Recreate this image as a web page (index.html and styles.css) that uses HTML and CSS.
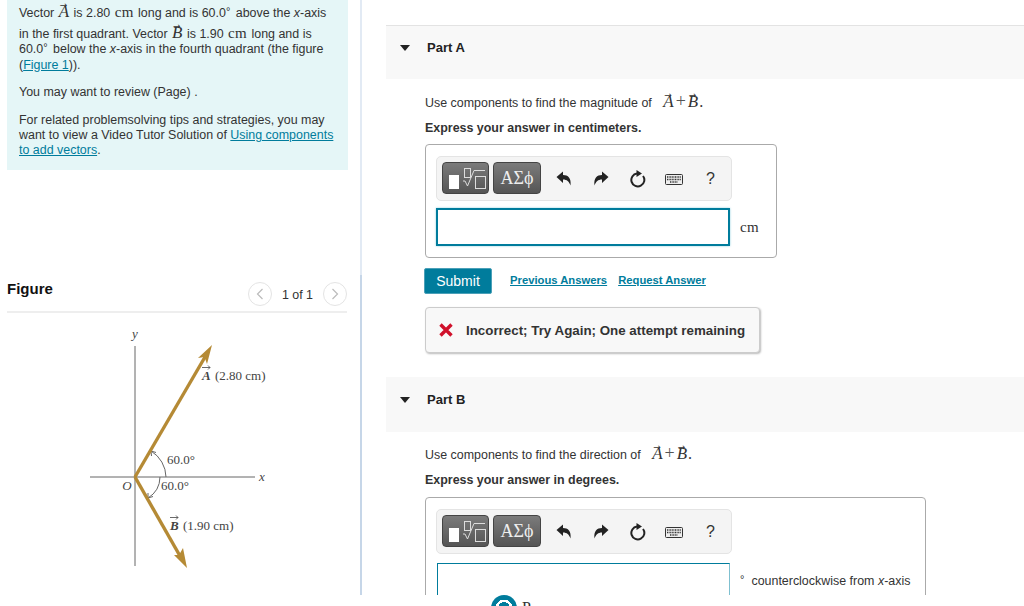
FILE: index.html
```html
<!DOCTYPE html>
<html lang="en">
<head>
  <meta charset="UTF-8" />
  <title>Vector addition</title>
  <link rel="stylesheet" href="styles.css">
</head>
<body>
  <div class="page">
    <div class="left-col">
      <div class="intro">
        <p class="first">
          <span class="line">Vector <span class="vec vec-a">A</span> is 2.80 <span class="unit">cm</span> long and is 60.0<sup>&deg;</sup> above the <i>x</i>-axis</span>
          <span class="line">in the first quadrant. Vector <span class="vec vec-b">B</span> is 1.90 <span class="unit">cm</span> long and is</span>
          60.0<sup>&deg;</sup> below the <i>x</i>-axis in the fourth quadrant (the figure<br>(<a href="#">Figure 1</a>)).
        </p>
        <p>You may want to review (Page) .</p>
        <p>For related problemsolving tips and strategies, you may<br>want to view a Video Tutor Solution of <a href="#">Using components<br>to add vectors</a>.</p>
      </div>

      <div class="figure-head">
        <h2>Figure</h2>
        <div class="pager">
          <span class="pager-btn"><svg width="8" height="12" viewBox="0 0 8 12"><path d="M6.5 1 L1.5 6 L6.5 11" /></svg></span>
          <span class="pager-text">1 of 1</span>
          <span class="pager-btn"><svg width="8" height="12" viewBox="0 0 8 12"><path d="M1.5 1 L6.5 6 L1.5 11" /></svg></span>
        </div>
      </div>

      <!-- viewBox starts at the figure's place on the page -->
      <svg class="figure" width="340" height="282" viewBox="7 313 340 282">
        <g class="axis">
          <line x1="135" y1="346" x2="135" y2="566" />
          <line x1="90" y1="477" x2="255" y2="477" />
          <path d="M166 477 A 31 31 0 0 0 151 451" />
          <path d="M160 477 A 25 25 0 0 1 148 498" />
          <path d="M151 451 l0.5 5 M151 451 l5 1.5 M148 498 l5 -1.5 M148 498 l0 -5" />
        </g>
        <line class="vector" x1="135" y1="477" x2="205" y2="357" />
        <path class="vector-head" d="M212 345 L198 358 L204.5 357 L207 364 Z" />
        <line class="vector" x1="135" y1="477" x2="180" y2="556" />
        <path class="vector-head" d="M187 568 L174 555 L179 555 L183 548 Z" />
        <text class="fig-italic" x="135" y="338" text-anchor="middle">y</text>
        <text class="fig-italic" x="262" y="481" text-anchor="middle">x</text>
        <text class="fig-italic" x="127" y="490" text-anchor="middle">O</text>
        <text class="fig-label" x="167" y="464">60.0&deg;</text>
        <text class="fig-label" x="161" y="490">60.0&deg;</text>
        <text class="fig-bold" x="202" y="380">A</text>
        <text class="fig-label" x="215" y="380">(2.80 cm)</text>
        <text class="fig-bold" x="170" y="530">B</text>
        <text class="fig-label" x="183" y="530">(1.90 cm)</text>
        <path class="fig-arrow" d="M202 367.5 h8 M208 365.5 l2 2 l-2 2 M170 517.5 h8 M176 515.5 l2 2 l-2 2" />
      </svg>
    </div>

    <div class="divider"></div>

    <div class="right-col">
      <section class="part part-a">
        <div class="part-head"><span class="caret"></span><span class="part-title">Part A</span></div>
        <div class="part-body">
          <p class="question">Use components to find the magnitude of <span class="math"><span class="vec vec-a">A</span><span class="plus">+</span><span class="vec vec-b">B</span>.</span></p>
          <p class="express">Express your answer in centimeters.</p>
          <div class="answer-box">
            <div class="toolbar">
              <span class="tool-btn tool-root">
                <svg width="45" height="30" viewBox="0 0 45 30"><rect class="fill" x="6" y="12" width="10" height="14" /><rect class="line" x="21.5" y="5.5" width="6" height="9" /><path class="line" d="M20 18 h2 l2.5 5 L31 7.5 H42" /><rect class="line" x="32.5" y="13.5" width="10" height="12" /></svg>
              </span>
              <span class="tool-btn tool-greek">&Alpha;&Sigma;&#981;</span>
              <span class="tool-icons">
                <svg class="undo" width="16" height="16" viewBox="0 0 16 16"><path class="solid" d="M0.5 6 L7 0.5 V4 C12 4 15.5 7 14.5 14.5 C13 10.5 11 8.5 7 8.5 V12 Z" /></svg>
                <svg class="redo" width="16" height="16" viewBox="0 0 16 16"><path class="solid" d="M15.5 6 L9 0.5 V4 C4 4 0.5 7 1.5 14.5 C3 10.5 5 8.5 9 8.5 V12 Z" /></svg>
                <svg class="reload" width="18" height="18" viewBox="0 0 18 18"><path class="ring" d="M8 3.5 A6.5 6.5 0 1 0 14 6" /><path class="solid" d="M7.5 0 L13 3.5 L7.5 7 Z" /></svg>
                <svg class="keyboard" width="20" height="14" viewBox="0 0 20 14"><rect class="kbd" x="1.5" y="2.5" width="17" height="10" rx="1" /><path class="kbd-keys" d="M3 5 h14 M3 7.5 h14 M6 10 h8" /></svg>
                <span class="help">?</span>
              </span>
            </div>
            <div class="input-row">
              <div class="answer-input"></div>
              <span class="unit unit-label">cm</span>
            </div>
          </div>
          <div class="actions">
            <button class="submit">Submit</button>
            <a href="#" class="action-link">Previous Answers</a>
            <a href="#" class="action-link">Request Answer</a>
          </div>
          <div class="feedback">
            <svg width="14" height="14" viewBox="0 0 14 14"><path d="M1.5 1.5 L12.5 12.5 M12.5 1.5 L1.5 12.5" /></svg>
            <span>Incorrect; Try Again; One attempt remaining</span>
          </div>
        </div>
      </section>

      <section class="part part-b">
        <div class="part-head"><span class="caret"></span><span class="part-title">Part B</span></div>
        <div class="part-body">
          <p class="question">Use components to find the direction of <span class="math"><span class="vec vec-a">A</span><span class="plus">+</span><span class="vec vec-b">B</span>.</span></p>
          <p class="express">Express your answer in degrees.</p>
          <div class="answer-box">
            <div class="toolbar">
              <span class="tool-btn tool-root">
                <svg width="45" height="30" viewBox="0 0 45 30"><rect class="fill" x="6" y="12" width="10" height="14" /><rect class="line" x="21.5" y="5.5" width="6" height="9" /><path class="line" d="M20 18 h2 l2.5 5 L31 7.5 H42" /><rect class="line" x="32.5" y="13.5" width="10" height="12" /></svg>
              </span>
              <span class="tool-btn tool-greek">&Alpha;&Sigma;&#981;</span>
              <span class="tool-icons">
                <svg class="undo" width="16" height="16" viewBox="0 0 16 16"><path class="solid" d="M0.5 6 L7 0.5 V4 C12 4 15.5 7 14.5 14.5 C13 10.5 11 8.5 7 8.5 V12 Z" /></svg>
                <svg class="redo" width="16" height="16" viewBox="0 0 16 16"><path class="solid" d="M15.5 6 L9 0.5 V4 C4 4 0.5 7 1.5 14.5 C3 10.5 5 8.5 9 8.5 V12 Z" /></svg>
                <svg class="reload" width="18" height="18" viewBox="0 0 18 18"><path class="ring" d="M8 3.5 A6.5 6.5 0 1 0 14 6" /><path class="solid" d="M7.5 0 L13 3.5 L7.5 7 Z" /></svg>
                <svg class="keyboard" width="20" height="14" viewBox="0 0 20 14"><rect class="kbd" x="1.5" y="2.5" width="17" height="10" rx="1" /><path class="kbd-keys" d="M3 5 h14 M3 7.5 h14 M6 10 h8" /></svg>
                <span class="help">?</span>
              </span>
            </div>
            <div class="input-row">
              <div class="answer-input"></div>
              <span class="deg-label"><sup>&deg;</sup>counterclockwise from <i>x</i>-axis</span>
            </div>
          </div>
        </div>
      </section>
    </div>
  </div>

  <div class="footer">
    <span class="logo"></span><span class="logo-text">P</span>
  </div>
</body>
</html>
```

FILE: styles.css
```css
html, body {
  margin: 0;
  padding: 0;
  height: 606px;
  overflow: hidden;
  background: #fff;
}

body {
  font-family: "Liberation Sans", Arial, sans-serif;
  font-size: 12.45px;
  color: #333;
}

.page {
  display: flex;
  height: 595px;
  overflow: hidden;
}

.left-col {
  width: 340px;
  margin-left: 7px;
  margin-right: 13px;
  flex: none;
}

.intro {
  width: 341px;
  height: 170px;
  box-sizing: border-box;
  background: #e5f6f7;
  padding: 5px 12px 0;
  line-height: 15.4px;
}

.intro p {
  margin: 0 0 12px;
}

.intro .line {
  display: block;
  white-space: nowrap;
}

.intro .line:first-child {
  margin-bottom: 4.6px;
}

.intro .unit {
  margin: 0 1px;
}

a {
  color: #007c9c;
}

sup {
  font-size: 11px;
  line-height: 0;
  vertical-align: 2px;
  margin-right: 2px;
}

.vec {
  position: relative;
  display: inline-block;
  padding: 0 1px;
  font-family: "Liberation Serif", serif;
  font-style: italic;
  font-size: 17px;
  line-height: 12px;
}

.vec::before {
  content: "\2192";
  position: absolute;
  left: 2px;
  top: -7px;
  font-size: 9px;
  font-style: normal;
  font-family: "DejaVu Sans", sans-serif;
}

.unit {
  font-family: "Liberation Serif", serif;
  font-size: 15px;
  letter-spacing: 0.3px;
}

.figure-head {
  display: flex;
  justify-content: space-between;
  align-items: flex-end;
  height: 143px;
  padding-bottom: 5px;
  box-sizing: border-box;
  border-bottom: 2px solid #eee;
}

.figure-head h2 {
  margin: 0 0 9px;
  font-size: 15px;
  color: #111;
}

.pager {
  display: flex;
  align-items: center;
  gap: 10px;
}

.pager-text {
  margin-top: 1px;
}

.pager-btn {
  display: flex;
  align-items: center;
  justify-content: center;
  width: 24px;
  height: 24px;
  border: 1px solid #e4e4e4;
  border-radius: 50%;
  box-sizing: border-box;
}

.pager-btn path {
  fill: none;
  stroke: #bbb;
  stroke-width: 1.2;
}

.figure .axis line,
.figure .axis path {
  fill: none;
  stroke: #666;
  stroke-width: 1;
}

.figure .vector {
  stroke: #b58a35;
  stroke-width: 3.4;
}

.figure .vector-head {
  fill: #b58a35;
}

.fig-label, .fig-italic, .fig-bold {
  font-family: "Liberation Serif", serif;
  font-size: 13px;
  fill: #444;
}

.fig-italic {
  font-style: italic;
}

.fig-bold {
  font-style: italic;
  font-weight: bold;
}

.fig-arrow {
  fill: none;
  stroke: #444;
  stroke-width: 0.8;
}

.divider {
  flex: none;
  width: 2px;
  background: linear-gradient(#e2eaf4 275px, #c6d6e8 275px);
}

.right-col {
  flex: 1;
  min-width: 0;
  padding-left: 24px;
  padding-top: 25px;
}

.part-head {
  display: flex;
  align-items: flex-start;
  background: #f8f8f8;
  height: 54px;
  box-sizing: border-box;
  padding: 14px 0 0 14px;
  border-top: 1px solid #e3e3e3;
}

.part-b .part-head {
  height: 55px;
  padding-top: 15px;
  border-top: 0;
}

.caret {
  width: 0;
  height: 0;
  margin-top: 5px;
  border-left: 5px solid transparent;
  border-right: 5px solid transparent;
  border-top: 6px solid #222;
}

.part-title {
  margin-left: 17px;
  font-size: 13px;
  font-weight: bold;
  color: #222;
}

.part-body {
  padding: 0 0 0 39px;
}

.question {
  margin: 12px 0 0;
  height: 22px;
  line-height: 22px;
}

.part-b .question {
  margin-top: 11px;
}

.math {
  margin-left: 7px;
  font-family: "Liberation Serif", serif;
  font-size: 16px;
}

.plus {
  margin: 0 1px;
  font-size: 18px;
  line-height: 12px;
  color: #555;
}

.express {
  margin: 7px 0 0;
  font-weight: bold;
  line-height: 16px;
}

.answer-box {
  width: 352px;
  height: 114px;
  box-sizing: border-box;
  margin-top: 8px;
  padding: 11px 10px;
  border: 1px solid #aaa;
  border-radius: 4px;
}

.part-b .answer-box {
  width: 501px;
  height: 130px;
  margin-top: 9px;
}

.toolbar {
  display: flex;
  align-items: center;
  box-sizing: border-box;
  width: 296px;
  height: 45px;
  padding: 0 5px;
  gap: 4px;
  background: #f4f4f4;
  border: 1px solid #e4e4e4;
  border-radius: 5px;
}

.tool-btn {
  display: flex;
  align-items: center;
  justify-content: center;
  height: 32px;
  margin-bottom: 1px;
  box-sizing: border-box;
  border: 1px solid #444;
  border-radius: 4px;
  background: linear-gradient(#7b7b7b, #555);
  color: #eee;
}

.tool-root {
  width: 47px;
}

.tool-greek {
  width: 48px;
  font-family: "Liberation Serif", "DejaVu Serif", serif;
  font-size: 18px;
}

.tool-root .fill {
  fill: #fff;
}

.tool-root .line {
  fill: none;
  stroke: #ddd;
  stroke-width: 1;
}

.tool-icons {
  display: flex;
  align-items: center;
  flex: 1;
  padding-left: 11px;
}

.redo {
  margin-left: 21px;
}

.reload {
  margin-left: 20px;
}

.keyboard {
  margin-left: 17px;
}

.help {
  margin-left: 22px;
  font-size: 16px;
  color: #333;
}

.solid {
  fill: #222;
}

.ring {
  fill: none;
  stroke: #222;
  stroke-width: 2;
}

.kbd {
  fill: #eee;
  stroke: #333;
}

.kbd-keys {
  fill: none;
  stroke: #333;
  stroke-width: 1.4;
  stroke-dasharray: 1 0.6;
}

.input-row {
  display: flex;
  align-items: center;
  margin-top: 7px;
}

.part-b .input-row {
  margin-top: 9px;
}

.answer-input {
  width: 294px;
  height: 38px;
  flex: none;
  box-sizing: border-box;
  border: 2px solid #007c9c;
  box-shadow: 0 0 2px #8fd0e0;
  background: #fff;
}

.part-b .answer-input {
  width: 293px;
  margin-left: 1px;
  border: 1px solid #007c9c;
  border-right-color: #7fc0d0;
  box-shadow: none;
}

.unit-label {
  margin-left: 10px;
  color: #333;
}

.deg-label {
  margin: 0 0 3px 10px;
  white-space: nowrap;
}

.deg-label sup {
  margin-right: 7px;
}

.actions {
  display: flex;
  align-items: center;
  margin-top: 10px;
}

.submit {
  width: 68px;
  height: 26px;
  margin-left: -1px;
  border: 1px solid #4ba0b8;
  border-radius: 2px;
  background: #007c9c;
  color: #fff;
  font-family: "Liberation Sans", Arial, sans-serif;
  font-size: 14px;
}

.action-link {
  margin: 0 0 2px 11px;
  font-size: 11.25px;
  font-weight: bold;
}

.actions .submit + .action-link {
  margin-left: 18px;
}

.feedback {
  display: flex;
  align-items: center;
  gap: 13px;
  box-sizing: border-box;
  width: 335px;
  height: 46px;
  margin: 13px 0 0;
  padding-left: 13px;
  background: #f8f8f8;
  border: 1px solid #ccc;
  border-radius: 4px;
  box-shadow: 1px 1px 2px #bbb;
  font-weight: bold;
  font-size: 13.35px;
  color: #333;
}

.feedback path {
  stroke: #d0112b;
  stroke-width: 3.4;
}

.part-b {
  margin-top: 24px;
}

.footer {
  position: relative;
  height: 11px;
  overflow: hidden;
}

.logo {
  position: absolute;
  left: 491px;
  top: 0;
  width: 26px;
  height: 26px;
  border-radius: 50%;
  background: radial-gradient(circle, #007c9c 0 6px, #fff 6px 8.5px, #007c9c 8.5px);
}

.logo-text {
  position: absolute;
  left: 522px;
  top: 5px;
  font-family: "Liberation Serif", serif;
  font-size: 16px;
  line-height: 16px;
}
```
